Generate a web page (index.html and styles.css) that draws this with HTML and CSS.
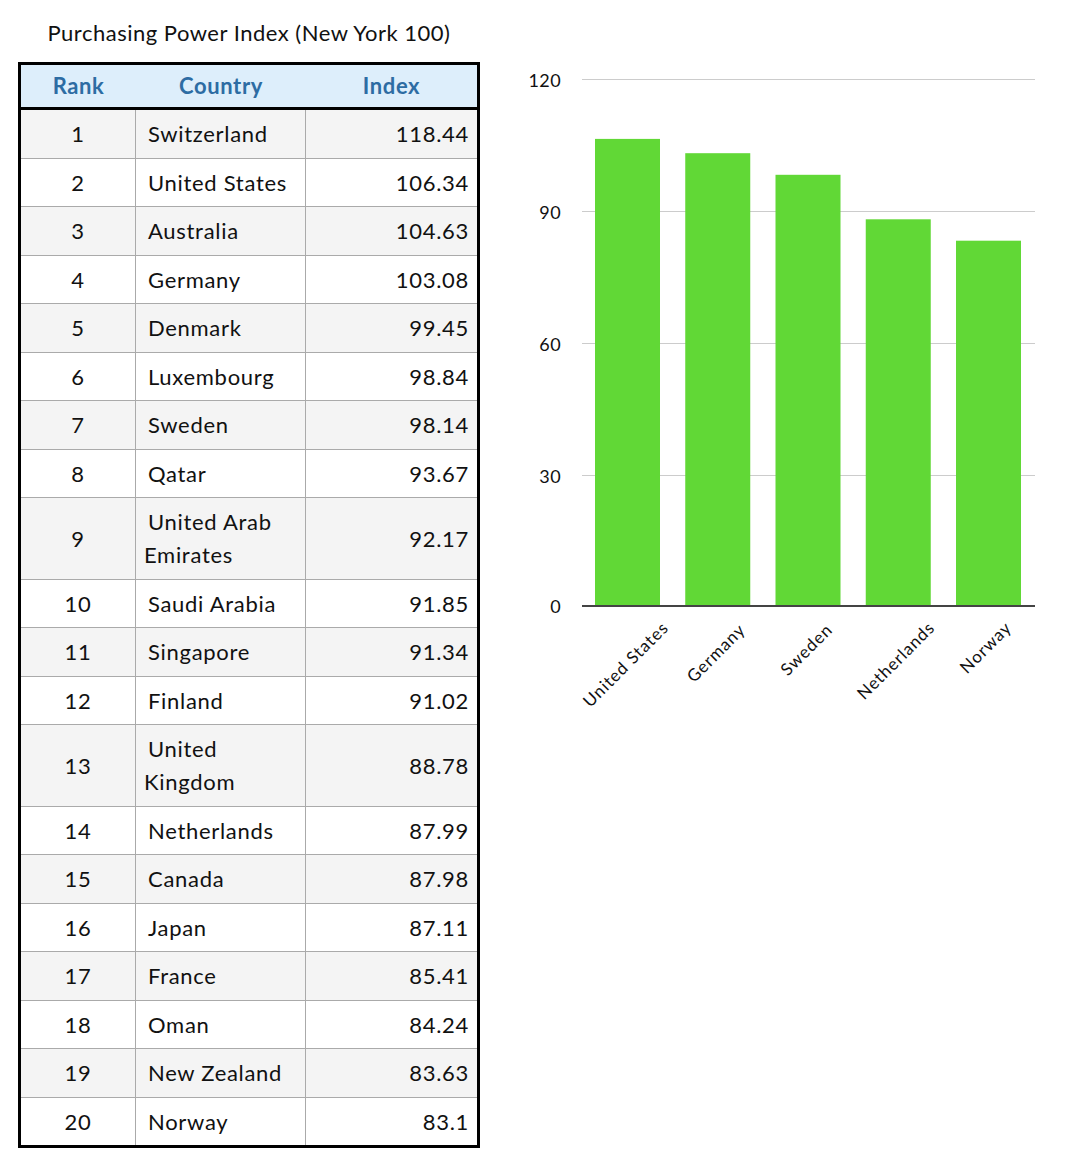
FILE: index.html
```html
<!DOCTYPE html>
<html lang="en">
<head>
<meta charset="utf-8">
<title>Purchasing Power Index</title>
<link rel="stylesheet" href="styles.css">
</head>
<body>
<main class="page">
  <section class="table-panel">
    <h1 class="title">Purchasing Power Index (New York 100)</h1>
    <table class="ppi">
      <colgroup>
        <col class="c-rank">
        <col class="c-country">
        <col class="c-index">
      </colgroup>
      <thead>
        <tr><th>Rank</th><th>Country</th><th>Index</th></tr>
      </thead>
      <tbody>
        <tr><td class="rank">1</td><td class="country">Switzerland</td><td class="idx">118.44</td></tr>
        <tr><td class="rank">2</td><td class="country">United States</td><td class="idx">106.34</td></tr>
        <tr><td class="rank">3</td><td class="country">Australia</td><td class="idx">104.63</td></tr>
        <tr><td class="rank">4</td><td class="country">Germany</td><td class="idx">103.08</td></tr>
        <tr><td class="rank">5</td><td class="country">Denmark</td><td class="idx">99.45</td></tr>
        <tr><td class="rank">6</td><td class="country">Luxembourg</td><td class="idx">98.84</td></tr>
        <tr><td class="rank">7</td><td class="country">Sweden</td><td class="idx">98.14</td></tr>
        <tr><td class="rank">8</td><td class="country">Qatar</td><td class="idx">93.67</td></tr>
        <tr><td class="rank">9</td><td class="country">United Arab<br>Emirates</td><td class="idx">92.17</td></tr>
        <tr><td class="rank">10</td><td class="country">Saudi Arabia</td><td class="idx">91.85</td></tr>
        <tr><td class="rank">11</td><td class="country">Singapore</td><td class="idx">91.34</td></tr>
        <tr><td class="rank">12</td><td class="country">Finland</td><td class="idx">91.02</td></tr>
        <tr><td class="rank">13</td><td class="country">United<br>Kingdom</td><td class="idx">88.78</td></tr>
        <tr><td class="rank">14</td><td class="country">Netherlands</td><td class="idx">87.99</td></tr>
        <tr><td class="rank">15</td><td class="country">Canada</td><td class="idx">87.98</td></tr>
        <tr><td class="rank">16</td><td class="country">Japan</td><td class="idx">87.11</td></tr>
        <tr><td class="rank">17</td><td class="country">France</td><td class="idx">85.41</td></tr>
        <tr><td class="rank">18</td><td class="country">Oman</td><td class="idx">84.24</td></tr>
        <tr><td class="rank">19</td><td class="country">New Zealand</td><td class="idx">83.63</td></tr>
        <tr><td class="rank">20</td><td class="country">Norway</td><td class="idx">83.1</td></tr>
      </tbody>
    </table>
  </section>

  <figure class="chart">
    <svg class="chart-svg" width="548" height="700" viewBox="500 20 548 700" xmlns="http://www.w3.org/2000/svg">
      <g class="grid">
        <rect x="582" y="79" width="453" height="1"/>
        <rect x="582" y="211" width="453" height="1"/>
        <rect x="582" y="343" width="453" height="1"/>
        <rect x="582" y="475" width="453" height="1"/>
      </g>
      <g class="y-labels">
        <text x="561" y="79.5">120</text>
        <text x="561" y="211.5">90</text>
        <text x="561" y="343.5">60</text>
        <text x="561" y="475.5">30</text>
        <text x="561" y="606">0</text>
      </g>
      <g class="bars">
        <rect x="595" y="138.9" width="65" height="466.1"/>
        <rect x="685.25" y="153.2" width="65" height="451.8"/>
        <rect x="775.5" y="174.8" width="65" height="430.2"/>
        <rect x="865.75" y="219.3" width="65" height="385.7"/>
        <rect x="956" y="240.7" width="65" height="364.3"/>
      </g>
      <rect class="axis" x="582" y="605" width="453" height="2"/>
      <g class="x-labels">
        <text x="669.5" y="629" transform="rotate(-45 669.5 629)">United States</text>
        <text x="746.4" y="631" transform="rotate(-45 746.4 631)">Germany</text>
        <text x="833.5" y="631" transform="rotate(-45 833.5 631)">Sweden</text>
        <text x="935.8" y="629" transform="rotate(-45 935.8 629)">Netherlands</text>
        <text x="1012.5" y="629" transform="rotate(-45 1012.5 629)">Norway</text>
      </g>
    </svg>
  </figure>
</main>
</body>
</html>
```
FILE: styles.css
```css
html, body {
  margin: 0;
  padding: 0;
  background: #ffffff;
}

body {
  font-family: Lato, "Noto Sans", "Liberation Sans", sans-serif;
  color: #000;
}

.page {
  display: flex;
  align-items: flex-start;
  gap: 20px;
  padding: 20px 0 0 18px;
}

.table-panel {
  width: 462px;
  flex: 0 0 462px;
}

.title {
  margin: 0 0 16px;
  font-size: 22px;
  font-weight: 400;
  line-height: 26px;
  letter-spacing: 0.5px;
  text-align: center;
  color: #111;
}

.ppi {
  width: 462px;
  table-layout: fixed;
  border: 3px solid #000;
  border-collapse: separate;
  border-spacing: 0;
}

.c-rank { width: 115px; }
.c-country { width: 170px; }
.c-index { width: 171px; }

.ppi th {
  height: 42px;
  padding: 0;
  background: #ddeefb;
  border-bottom: 3px solid #000;
  color: #2d6ca3;
  font-size: 22px;
  font-weight: 700;
  line-height: 40px;
  letter-spacing: 0.6px;
  text-align: center;
}

.ppi td {
  padding: 7.25px 0;
  font-size: 22px;
  line-height: 33px;
  letter-spacing: 0.7px;
  border-bottom: 1px solid #aaaaaa;
  white-space: nowrap;
  color: #111;
}

.ppi td.rank,
.ppi td.country {
  border-right: 1px solid #aaaaaa;
}

.ppi tbody tr:last-child td {
  border-bottom: 0;
}

.ppi tbody tr:nth-child(odd) {
  background: #f4f4f4;
}

.rank {
  text-align: center;
}

.country {
  padding-left: 8px !important;
  text-indent: 4px;
  text-align: left;
}

.idx {
  text-align: right;
  padding-right: 8px !important;
}

.chart {
  margin: 0;
  width: 548px;
  flex: 0 0 548px;
}

.chart-svg {
  display: block;
}

.grid rect {
  fill: #cccccc;
}

.bars rect {
  fill: #61d836;
}

.axis {
  fill: #444444;
}

.y-labels text {
  font-family: Lato, "Noto Sans", sans-serif;
  font-size: 18px;
  letter-spacing: 0.4px;
  fill: #111;
  text-anchor: end;
  dominant-baseline: central;
}

.x-labels text {
  font-family: Lato, "Noto Sans", sans-serif;
  font-size: 17px;
  letter-spacing: 0.9px;
  fill: #111;
  text-anchor: end;
}
```
